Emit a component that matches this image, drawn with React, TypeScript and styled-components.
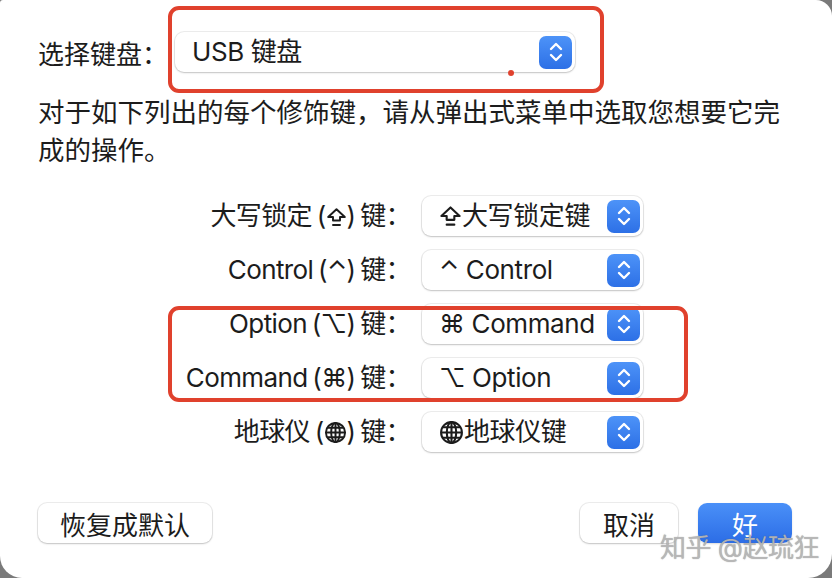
import styled, { createGlobalStyle } from 'styled-components';

const GlobalStyle = createGlobalStyle`
  html, body {
    margin: 0;
    padding: 0;
    background: #7a7a7a;
  }
  body {
    font-family: Inter, 'Noto Sans CJK SC', sans-serif;
    color: #1c1c1c;
  }
`;

interface Modifier {
  label: React.ReactNode; // 左侧标签
  value: React.ReactNode; // 弹出菜单当前值
}

function CapsIcon({ size = 22 }: { size?: number }) {
  return (
    <svg width={size} height={size} viewBox="0 0 24 24" fill="none" stroke="currentColor" strokeWidth="2.2" strokeLinejoin="round">
      <path d="M12 2.5 L21.5 11.5 H16 V15.5 H8 V11.5 H2.5 Z" />
      <path d="M8 20.5 H16" strokeLinecap="round" />
    </svg>
  );
}

function GlobeIcon({ size = 24 }: { size?: number }) {
  return (
    <svg width={size} height={size} viewBox="0 0 24 24" fill="none" stroke="currentColor" strokeWidth="2">
      <circle cx="12" cy="12" r="10" />
      <ellipse cx="12" cy="12" rx="4.5" ry="10" />
      <path d="M12 2 V22 M2 12 H22 M3.8 7 H20.2 M3.8 17 H20.2" />
    </svg>
  );
}

function StepperIcon() {
  return (
    <svg width="16" height="22" viewBox="0 0 16 22" fill="none" stroke="#fff" strokeWidth="2.4" strokeLinecap="round" strokeLinejoin="round">
      <path d="M3 8 L8 3 L13 8" />
      <path d="M3 14 L8 19 L13 14" />
    </svg>
  );
}

const modifiers: Modifier[] = [
  {
    label: <>大写锁定 (<Glyph><CapsIcon size={21} /></Glyph>) 键：</>,
    value: <><Glyph><CapsIcon size={23} /></Glyph>大写锁定键</>,
  },
  { label: <>Control (⌃) 键：</>, value: <>⌃ Control</> },
  { label: <>Option (⌥) 键：</>, value: <>⌘ Command</> },
  { label: <>Command (⌘) 键：</>, value: <>⌥ Option</> },
  {
    label: <>地球仪 (<Glyph><GlobeIcon size={23} /></Glyph>) 键：</>,
    value: <><Glyph><GlobeIcon size={25} /></Glyph>地球仪键</>,
  },
];

function Glyph({ children }: { children: React.ReactNode }) {
  return <GlyphWrap>{children}</GlyphWrap>;
}

function PopupButton({ width, children }: { width: number; children: React.ReactNode }) {
  return (
    <Popup $width={width}>
      <PopupText>{children}</PopupText>
      <Stepper>
        <StepperIcon />
      </Stepper>
    </Popup>
  );
}

export default function App() {
  return (
    <>
      <GlobalStyle />
      <Dialog>
        <TopRow>
          <FieldLabel>选择键盘：</FieldLabel>
          <PopupButton width={400}>USB 键盘</PopupButton>
        </TopRow>

        <Description>对于如下列出的每个修饰键，请从弹出式菜单中选取您想要它完成的操作。</Description>

        <ModifierGrid>
          {modifiers.map((item, index) => (
            <ModifierRow key={index}>
              <RowLabel>{item.label}</RowLabel>
              <PopupButton width={221}>{item.value}</PopupButton>
            </ModifierRow>
          ))}
        </ModifierGrid>

        <Footer>
          <Button>恢复成默认</Button>
          <ButtonGroup>
            <Button $width={98}>取消</Button>
            <Button $width={94} $primary>好</Button>
          </ButtonGroup>
        </Footer>

        <Annotation $top={6} $left={168} $width={436} $height={87} />
        <RedDot />
        <Annotation $top={306} $left={168} $width={520} $height={96} />
        <Watermark>知乎 @赵琉狂</Watermark>
      </Dialog>
    </>
  );
}

const Dialog = styled.div`
  position: relative;
  width: 832px;
  height: 578px;
  box-sizing: border-box;
  padding: 32px 40px 0 38px;
  background: #ffffff;
  border-radius: 3px 16px 24px 22px;
  overflow: hidden;
  display: flex;
  flex-direction: column;
  font-size: 26px;
`;

const TopRow = styled.div`
  display: flex;
  align-items: center;
`;

const FieldLabel = styled.div`
  width: 137px;
  font-size: 26px;
  white-space: nowrap;
`;

const Popup = styled.div<{ $width: number }>`
  width: ${({ $width }) => $width}px;
  height: 40px;
  box-sizing: border-box;
  display: flex;
  align-items: center;
  justify-content: space-between;
  padding: 0 3px 0 17px;
  background: #ffffff;
  border-radius: 9px;
  box-shadow: 0 0 0 1px rgba(0, 0, 0, 0.07), 0 1px 2px rgba(0, 0, 0, 0.18);
`;

const PopupText = styled.div`
  display: flex;
  align-items: center;
  font-size: 26px;
  line-height: 1;
  letter-spacing: -0.4px;
  white-space: nowrap;
`;

const GlyphWrap = styled.span`
  display: inline-flex;
  align-items: center;
  justify-content: center;
  vertical-align: -3px;
`;

const Stepper = styled.div`
  width: 33px;
  height: 33px;
  border-radius: 7px;
  display: flex;
  align-items: center;
  justify-content: center;
  background: linear-gradient(180deg, #4d93f8 0%, #2d70e6 100%);
`;

const Description = styled.p`
  margin: 21px 0 0;
  width: 760px;
  font-size: 26.5px;
  line-height: 38px;
`;

const ModifierGrid = styled.div`
  margin-top: 27px;
  display: flex;
  flex-direction: column;
  gap: 14px;
`;

const ModifierRow = styled.div`
  display: grid;
  grid-template-columns: 373px 221px;
  column-gap: 11px;
  align-items: center;
`;

const RowLabel = styled.div`
  text-align: right;
  font-size: 26px;
  line-height: 1;
  letter-spacing: -0.6px;
  word-spacing: -2px;
  white-space: nowrap;
`;

const Footer = styled.div`
  margin-top: 51px;
  display: flex;
  justify-content: space-between;
  align-items: center;
`;

const ButtonGroup = styled.div`
  display: flex;
  gap: 20px;
`;

const Button = styled.button<{ $width?: number; $primary?: boolean }>`
  width: ${({ $width }) => ($width ? `${$width}px` : '174px')};
  height: 40px;
  border: none;
  border-radius: 9px;
  font-family: inherit;
  font-size: 26px;
  padding: 0;
  color: ${({ $primary }) => ($primary ? '#ffffff' : '#1c1c1c')};
  background: ${({ $primary }) =>
    $primary ? 'linear-gradient(180deg, #4a90f8 0%, #2c6de6 100%)' : '#ffffff'};
  box-shadow: ${({ $primary }) =>
    $primary
      ? '0 1px 2px rgba(0, 0, 0, 0.15)'
      : '0 0 0 1px rgba(0, 0, 0, 0.07), 0 1px 2px rgba(0, 0, 0, 0.18)'};
`;

const Annotation = styled.div<{ $top: number; $left: number; $width: number; $height: number }>`
  position: absolute;
  top: ${({ $top }) => $top}px;
  left: ${({ $left }) => $left}px;
  width: ${({ $width }) => $width}px;
  height: ${({ $height }) => $height}px;
  box-sizing: border-box;
  border: 4px solid #e0412d;
  border-radius: 11px;
  pointer-events: none;
`;

const RedDot = styled.div`
  position: absolute;
  top: 70px;
  left: 508px;
  width: 6px;
  height: 6px;
  border-radius: 50%;
  background: #e0412d;
`;

const Watermark = styled.div`
  position: absolute;
  left: 660px;
  top: 527px;
  font-size: 26px;
  color: rgba(185, 185, 185, 0.92);
  text-shadow: 0 0 1px rgba(90, 90, 90, 0.6);
  white-space: nowrap;
  letter-spacing: -0.5px;
`;
